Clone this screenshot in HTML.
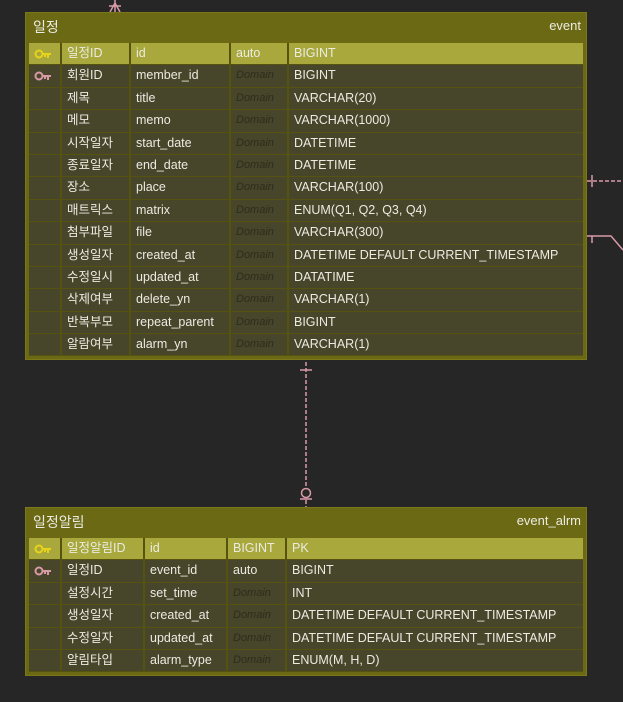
<!DOCTYPE html><html><head><meta charset="utf-8"><style>
body{margin:0;width:623px;height:702px;background:#262626;position:relative;overflow:hidden;font-family:"Liberation Sans","Noto Sans CJK KR",sans-serif;color:#ecebe2;font-size:12.5px}
.t{position:absolute;background:#6b6914;border:1px solid #7a7818;box-sizing:border-box}
.h{position:absolute;top:0;left:0;right:0;height:28px;font-size:14px}
.h .l{position:absolute;left:7px;top:4px}.h .r{position:absolute;right:5px;top:5px;font-size:13px}
.rows{position:absolute;left:3px;right:3px;background:#55530f}
.row{display:flex;height:22.4px;box-sizing:border-box;border-bottom:1.5px solid #55530f}
.c{background:#47452a;margin-right:2px;padding-left:5px;line-height:21px;white-space:nowrap;overflow:hidden}
.c:last-child{margin-right:0;flex:1}
.pk .c{background:#a8a83c}
.d{color:#2e2d1c;font-style:italic;font-size:11px}
.bg{position:absolute}
.k{display:block;margin:6px 0 0 0}
</style></head><body>
<svg class="bg" width="623" height="702" style="left:0;top:0">
<g stroke="#d99aa8" stroke-width="1.5" fill="none">
<path d="M115 0V12M110 12L115 3L120 12M109 6H121"/>
<path d="M306 362V507" stroke-dasharray="4 2"/>
<path d="M300 370H312M300 499H312"/>
<circle cx="306" cy="493" r="4.5" fill="#262626"/>
<path d="M587 181H623" stroke-dasharray="4 2"/>
<path d="M592 175V187M592 236V243"/>
<path d="M587 236H611L623 250"/>
</g></svg>

<div class="t" style="left:25px;top:12px;width:562px;height:348px">
<div class="h"><span class="l">일정</span><span class="r">event</span></div>
<div class="rows" style="top:30px">
<div class="row pk"><div class="c" style="width:26px"><svg class="k" width="18" height="10"><g stroke="#e8d21a" stroke-width="2" fill="none"><circle cx="5" cy="5" r="3.5"/><path d="M8.5 5H17M14 5V9M11 5V8"/></g></svg></div><div class="c" style="width:62px">일정ID</div><div class="c" style="width:93px">id</div><div class="c" style="width:51px">auto</div><div class="c">BIGINT</div></div>
<div class="row"><div class="c" style="width:26px"><svg class="k" width="18" height="10"><g stroke="#d99aa8" stroke-width="2" fill="none"><circle cx="5" cy="5" r="3.5"/><path d="M8.5 5H17M14 5V9M11 5V8"/></g></svg></div><div class="c" style="width:62px">회원ID</div><div class="c" style="width:93px">member_id</div><div class="c d" style="width:51px">Domain</div><div class="c">BIGINT</div></div>
<div class="row"><div class="c" style="width:26px"></div><div class="c" style="width:62px">제목</div><div class="c" style="width:93px">title</div><div class="c d" style="width:51px">Domain</div><div class="c">VARCHAR(20)</div></div>
<div class="row"><div class="c" style="width:26px"></div><div class="c" style="width:62px">메모</div><div class="c" style="width:93px">memo</div><div class="c d" style="width:51px">Domain</div><div class="c">VARCHAR(1000)</div></div>
<div class="row"><div class="c" style="width:26px"></div><div class="c" style="width:62px">시작일자</div><div class="c" style="width:93px">start_date</div><div class="c d" style="width:51px">Domain</div><div class="c">DATETIME</div></div>
<div class="row"><div class="c" style="width:26px"></div><div class="c" style="width:62px">종료일자</div><div class="c" style="width:93px">end_date</div><div class="c d" style="width:51px">Domain</div><div class="c">DATETIME</div></div>
<div class="row"><div class="c" style="width:26px"></div><div class="c" style="width:62px">장소</div><div class="c" style="width:93px">place</div><div class="c d" style="width:51px">Domain</div><div class="c">VARCHAR(100)</div></div>
<div class="row"><div class="c" style="width:26px"></div><div class="c" style="width:62px">매트릭스</div><div class="c" style="width:93px">matrix</div><div class="c d" style="width:51px">Domain</div><div class="c">ENUM(Q1, Q2, Q3, Q4)</div></div>
<div class="row"><div class="c" style="width:26px"></div><div class="c" style="width:62px">첨부파일</div><div class="c" style="width:93px">file</div><div class="c d" style="width:51px">Domain</div><div class="c">VARCHAR(300)</div></div>
<div class="row"><div class="c" style="width:26px"></div><div class="c" style="width:62px">생성일자</div><div class="c" style="width:93px">created_at</div><div class="c d" style="width:51px">Domain</div><div class="c">DATETIME DEFAULT CURRENT_TIMESTAMP</div></div>
<div class="row"><div class="c" style="width:26px"></div><div class="c" style="width:62px">수정일시</div><div class="c" style="width:93px">updated_at</div><div class="c d" style="width:51px">Domain</div><div class="c">DATATIME</div></div>
<div class="row"><div class="c" style="width:26px"></div><div class="c" style="width:62px">삭제여부</div><div class="c" style="width:93px">delete_yn</div><div class="c d" style="width:51px">Domain</div><div class="c">VARCHAR(1)</div></div>
<div class="row"><div class="c" style="width:26px"></div><div class="c" style="width:62px">반복부모</div><div class="c" style="width:93px">repeat_parent</div><div class="c d" style="width:51px">Domain</div><div class="c">BIGINT</div></div>
<div class="row"><div class="c" style="width:26px"></div><div class="c" style="width:62px">알람여부</div><div class="c" style="width:93px">alarm_yn</div><div class="c d" style="width:51px">Domain</div><div class="c">VARCHAR(1)</div></div>
</div></div>

<div class="t" style="left:25px;top:507px;width:562px;height:169px">
<div class="h"><span class="l">일정알림</span><span class="r">event_alrm</span></div>
<div class="rows" style="top:30px">
<div class="row pk"><div class="c" style="width:26px"><svg class="k" width="18" height="10"><g stroke="#e8d21a" stroke-width="2" fill="none"><circle cx="5" cy="5" r="3.5"/><path d="M8.5 5H17M14 5V9M11 5V8"/></g></svg></div><div class="c" style="width:76px">일정알림ID</div><div class="c" style="width:76px">id</div><div class="c" style="width:52px">BIGINT</div><div class="c">PK</div></div>
<div class="row"><div class="c" style="width:26px"><svg class="k" width="18" height="10"><g stroke="#d99aa8" stroke-width="2" fill="none"><circle cx="5" cy="5" r="3.5"/><path d="M8.5 5H17M14 5V9M11 5V8"/></g></svg></div><div class="c" style="width:76px">일정ID</div><div class="c" style="width:76px">event_id</div><div class="c" style="width:52px">auto</div><div class="c">BIGINT</div></div>
<div class="row"><div class="c" style="width:26px"></div><div class="c" style="width:76px">설정시간</div><div class="c" style="width:76px">set_time</div><div class="c d" style="width:52px">Domain</div><div class="c">INT</div></div>
<div class="row"><div class="c" style="width:26px"></div><div class="c" style="width:76px">생성일자</div><div class="c" style="width:76px">created_at</div><div class="c d" style="width:52px">Domain</div><div class="c">DATETIME DEFAULT CURRENT_TIMESTAMP</div></div>
<div class="row"><div class="c" style="width:26px"></div><div class="c" style="width:76px">수정일자</div><div class="c" style="width:76px">updated_at</div><div class="c d" style="width:52px">Domain</div><div class="c">DATETIME DEFAULT CURRENT_TIMESTAMP</div></div>
<div class="row"><div class="c" style="width:26px"></div><div class="c" style="width:76px">알림타입</div><div class="c" style="width:76px">alarm_type</div><div class="c d" style="width:52px">Domain</div><div class="c">ENUM(M, H, D)</div></div>
</div></div>
</body></html>
